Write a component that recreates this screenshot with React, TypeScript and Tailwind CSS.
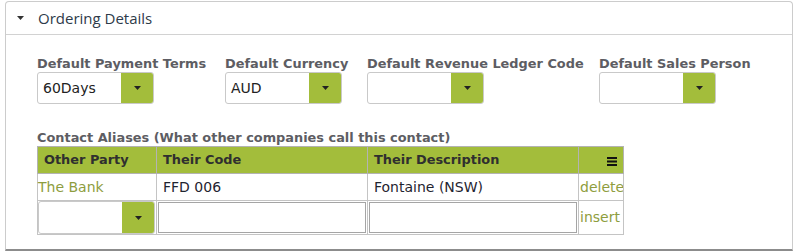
import React from "react";

const font = { fontFamily: '"DejaVu Sans", Verdana, sans-serif' };

function Caret() {
	return (
		<svg width="7" height="4" viewBox="0 0 7 4" className="block">
			<path d="M0 0h7L3.5 4z" fill="#222" />
		</svg>
	);
}

function SelectBox({ value, className = "" }: { value?: string; className?: string }) {
	return (
		<div
			className={`flex h-[32px] w-[117px] overflow-hidden rounded-[3px] border border-[#c9c9c9] bg-white ${className}`}
		>
			<div className="flex flex-1 items-center pl-[5px] text-[14px] text-[#222]">{value}</div>
			<div className="flex w-[32px] items-center justify-center bg-[#a3bd3b]">
				<Caret />
			</div>
		</div>
	);
}

function Field({ label, value, width }: { label: string; value?: string; width: string }) {
	return (
		<div className={width}>
			<div className="whitespace-nowrap text-[12.9px] font-bold leading-[16px] text-[#5d5d63]">
				{label}
			</div>
			<SelectBox value={value} />
		</div>
	);
}

export default function App() {
	return (
		<div className="bg-white pt-[1px] pl-[5px]" style={font}>
			<div className="w-[788px] rounded-t-[4px] border border-b-2 border-[#cccccc] border-b-[#8c8c8c]">
				{/* header */}
				<div className="flex h-[33px] items-center border-b border-[#d2d2d2] pl-[11px]">
					<svg width="7" height="4" viewBox="0 0 7 4" className="mr-[14px]">
						<path d="M0 0h7L3.5 4z" fill="#333" />
					</svg>
					<span
						className="text-[15px] text-[#2e3b4a]"
						style={{ fontFamily: '"Open Sans", "Noto Sans", sans-serif' }}
					>
						Ordering Details
					</span>
				</div>

				{/* body */}
				<div className="pt-[21px] pb-[14px] pl-[31px]">
					<div className="flex">
						<Field label="Default Payment Terms" value="60Days" width="w-[188px]" />
						<Field label="Default Currency" value="AUD" width="w-[142px]" />
						<Field label="Default Revenue Ledger Code" width="w-[232px]" />
						<Field label="Default Sales Person" width="w-[180px]" />
					</div>

					<div className="mt-[26px] whitespace-nowrap text-[12.9px] font-bold leading-[16px] text-[#5d5d63]">
						Contact Aliases (What other companies call this contact)
					</div>

					<table className="w-[586px] table-fixed border-collapse text-[14px]">
						<colgroup>
							<col className="w-[119px]" />
							<col className="w-[211px]" />
							<col className="w-[211px]" />
							<col className="w-[45px]" />
						</colgroup>
						<thead>
							<tr className="h-[27px] bg-[#a3bd3b] text-left text-[12.9px] font-bold text-[#2f2f2f]">
								<th className="border border-[#b3b3b3] px-[6px] font-bold">Other Party</th>
								<th className="border border-[#b3b3b3] px-[6px] font-bold">Their Code</th>
								<th className="border border-[#b3b3b3] px-[6px] font-bold">Their Description</th>
								<th className="border border-[#b3b3b3] pr-[6px]">
									<div className="flex justify-end pt-[3px]">
										<svg width="10" height="9" viewBox="0 0 10 9">
											<rect y="0" width="10" height="2" fill="#111" />
											<rect y="3.5" width="10" height="2" fill="#111" />
											<rect y="7" width="10" height="2" fill="#111" />
										</svg>
									</div>
								</th>
							</tr>
						</thead>
						<tbody>
							<tr className="h-[27px]">
								<td className="border border-[#c4c4c4] text-[#8e9d3e]">The Bank</td>
								<td className="border border-[#c4c4c4] px-[6px] text-[#1f2430]">FFD 006</td>
								<td className="border border-[#c4c4c4] px-[6px] text-[#1f2430]">Fontaine (NSW)</td>
								<td className="overflow-hidden border border-[#c4c4c4] pl-[1px] text-[#8e9d3e]">delete</td>
							</tr>
							<tr className="h-[34px]">
								<td className="border border-[#c4c4c4] p-0 pr-[2px]">
									<SelectBox className="h-[33px] w-[116px]" />
								</td>
								<td className="border border-[#c4c4c4] p-[1px]">
									<div className="h-[31px] w-full border border-[#a5a5a5] bg-white" />
								</td>
								<td className="border border-[#c4c4c4] p-[1px]">
									<div className="h-[31px] w-full border border-[#a5a5a5] bg-white" />
								</td>
								<td className="border border-[#c4c4c4] pl-[1px] text-[#8e9d3e]">insert</td>
							</tr>
						</tbody>
					</table>
				</div>
			</div>
		</div>
	);
}
